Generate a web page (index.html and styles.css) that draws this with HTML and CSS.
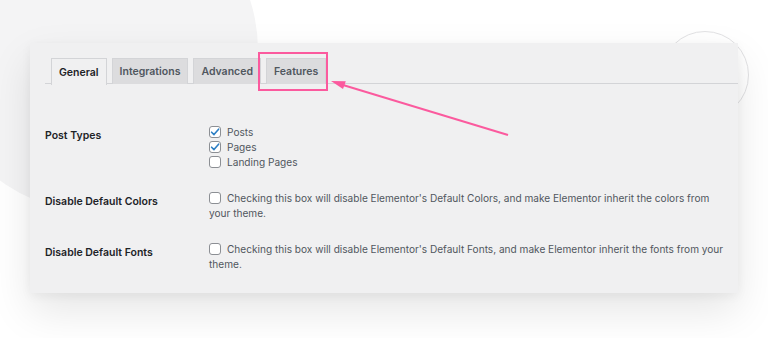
FILE: index.html
```html
<!DOCTYPE html>
<html>
<head>
<meta charset="utf-8">
<link rel="stylesheet" href="styles.css">
</head>
<body>
<div class="bg-blob"></div>
<div class="bg-ring"></div>
<div class="card">
  <nav class="tabs">
    <span class="tab active">General</span>
    <span class="tab">Integrations</span>
    <span class="tab">Advanced</span>
    <span class="tab">Features</span>
  </nav>
  <div class="form">
    <div class="row">
      <div class="label">Post Types</div>
      <div class="field">
        <div class="opt"><span class="cb checked"><svg viewBox="0 0 12 12"><path d="M2.6 6.2 L5 8.6 L9.6 3.2" /></svg></span>Posts</div>
        <div class="opt"><span class="cb checked"><svg viewBox="0 0 12 12"><path d="M2.6 6.2 L5 8.6 L9.6 3.2" /></svg></span>Pages</div>
        <div class="opt"><span class="cb"></span>Landing Pages</div>
      </div>
    </div>
    <div class="row">
      <div class="label">Disable Default Colors</div>
      <div class="field desc"><span class="cb"></span>Checking this box will disable Elementor's Default Colors, and make Elementor inherit the colors from your theme.</div>
    </div>
    <div class="row">
      <div class="label">Disable Default Fonts</div>
      <div class="field desc"><span class="cb"></span>Checking this box will disable Elementor's Default Fonts, and make Elementor inherit the fonts from your theme.</div>
    </div>
  </div>
</div>
<div class="highlight"></div>
<svg class="arrow" width="768" height="338" viewBox="0 0 768 338">
  <line x1="508" y1="135" x2="343" y2="85" />
  <polygon points="331,81 345.8,81.2 343,89" />
</svg>
</body>
</html>
```
FILE: styles.css
```css
html, body {
  margin: 0;
  padding: 0;
}
body {
  width: 768px;
  height: 338px;
  overflow: hidden;
  position: relative;
  background: #ffffff;
  font-family: Inter, "Liberation Sans", sans-serif;
  font-size: 10.5px;
  color: #50575e;
}
.bg-blob {
  position: absolute;
  left: -66px;
  top: -112px;
  width: 324px;
  height: 324px;
  border-radius: 50%;
  background: #f4f4f5;
}
.bg-ring {
  position: absolute;
  left: 661px;
  top: 31px;
  width: 86px;
  height: 86px;
  border-radius: 50%;
  border: 1px solid #e2e2e4;
  background: #ffffff;
}
.card {
  position: relative;
  margin: 43px 0 0 30px;
  width: 693px;
  height: 235px;
  padding: 15px 0 0 15px;
  background: #f0f0f1;
  box-shadow: 0 18px 40px rgba(0, 0, 0, 0.10), 0 3px 10px rgba(0, 0, 0, 0.05);
}
.tabs {
  display: flex;
  gap: 5px;
  padding-left: 6px;
  border-bottom: 1px solid #d3d4d7;
  height: 26px;
  box-sizing: border-box;
}
.tab {
  display: flex;
  align-items: center;
  height: 26px;
  box-sizing: border-box;
  padding: 0 7px;
  border: 1px solid #d3d4d7;
  border-bottom: none;
  background: #dcdcde;
  color: #50575e;
  font-weight: 600;
  font-size: 10.5px;
}
.tab.active {
  background: #f0f0f1;
  color: #1d2327;
  height: 27px;
  margin-bottom: -1px;
}
.form {
  padding-top: 30px;
}
.row {
  display: grid;
  grid-template-columns: 164px 1fr;
  padding: 10.5px 0;
}
.label {
  color: #1d2327;
  font-weight: 600;
  padding-top: 3px;
  line-height: 15px;
}
.field {
  line-height: 15px;
  padding-right: 6px;
  font-size: 10.1px;
}
.opt {
  display: flex;
  align-items: center;
  height: 15px;
}
.cb {
  display: inline-block;
  box-sizing: border-box;
  width: 12px;
  height: 12px;
  border: 1px solid #8c8f94;
  border-radius: 3px;
  background: #ffffff;
  margin-right: 6px;
  vertical-align: -2px;
  position: relative;
}
.cb svg {
  position: absolute;
  left: -1px;
  top: -1px;
  width: 12px;
  height: 12px;
}
.cb svg path {
  fill: none;
  stroke: #2d7fc4;
  stroke-width: 1.6;
  stroke-linecap: round;
  stroke-linejoin: round;
}
.highlight {
  position: absolute;
  left: 258px;
  top: 52px;
  width: 66px;
  height: 35px;
  border: 2px solid #fb5a9e;
}
.arrow {
  position: absolute;
  left: 0;
  top: 0;
}
.arrow line {
  stroke: #fb5a9e;
  stroke-width: 2;
}
.arrow polygon {
  fill: #fb5a9e;
}
```
